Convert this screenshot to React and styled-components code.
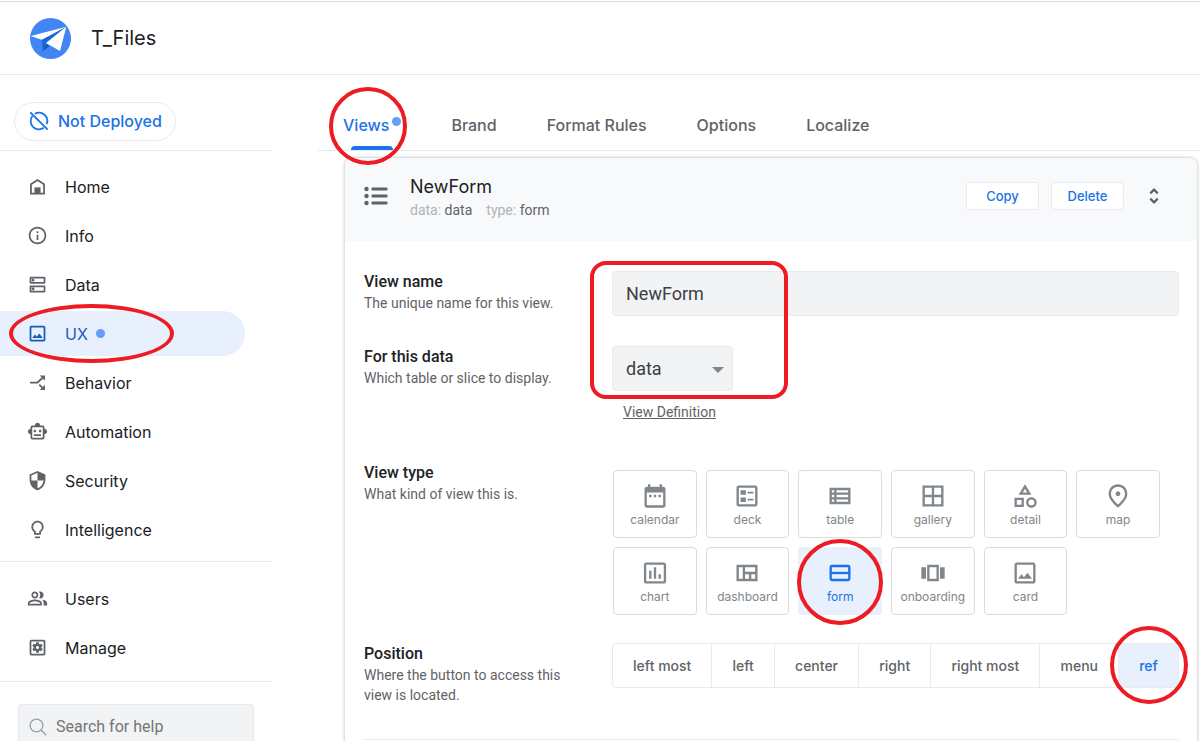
import React, { useState } from "react";
import styled, { createGlobalStyle, css } from "styled-components";
import {
  MdInfoOutline,
  MdOutlineDns,
  MdOutlineImage,
  MdOutlineSmartToy,
  MdSecurity,
  MdLightbulbOutline,
  MdOutlinePeopleAlt,
  MdOutlineSettingsApplications,
  MdDateRange,
  MdOutlineViewList,
  MdOutlineCategory,
  MdOutlinePlace,
  MdInsertChartOutlined,
  MdOutlineViewQuilt,
  MdOutlineViewCarousel,
} from "react-icons/md";

const colors = {
  blue: "#1a73e8",
  deepBlue: "#185abc",
  dot: "#669df6",
  selected: "#e8f0fe",
  text: "#202124",
  grey: "#5f6368",
  iconGrey: "#80868b",
  line: "#e8eaed",
  field: "#f1f3f4",
  marker: "#ed1c24",
};

const display = `Inter, "Open Sans", sans-serif`;
const body = `Roboto, "Liberation Sans", sans-serif`;

const GlobalStyle = createGlobalStyle`
  * { box-sizing: border-box; }
  body {
    margin: 0;
    background: white;
    color: ${colors.text};
    font-family: ${body};
    overflow: hidden;
  }
  button, input, select { font: inherit; color: inherit; margin: 0; }
  svg { display: block; flex: none; }
`;

const Page = styled.div`
  display: flex;
  flex-direction: column;
  height: 100vh;
  overflow: hidden;
`;

const TopBar = styled.header`
  display: flex;
  align-items: center;
  gap: 20px;
  flex: none;
  height: 74px;
  margin-top: 1px;
  padding: 0 30px;
  border-top: 1px solid #dadce0;
  border-bottom: 1px solid ${colors.line};
`;

const AppName = styled.h1`
  margin: 0;
  font: 400 20px/28px ${display};
`;

const Columns = styled.div`
  display: flex;
  flex: 1;
  min-height: 0;
`;

const Sidebar = styled.aside`
  flex: none;
  width: 272px;
`;

const DeployRow = styled.div`
  padding: 27px 14px 9px;
  border-bottom: 1px solid ${colors.line};
`;

const DeployButton = styled.button`
  display: inline-flex;
  align-items: center;
  vertical-align: top;
  gap: 8px;
  height: 39px;
  padding: 0 13px 2px;
  border: 1px solid ${colors.line};
  border-radius: 20px;
  background: white;
  color: ${colors.blue};
  font: 500 16px/24px ${display};
`;

const NavGroup = styled.nav`
  display: flex;
  flex-direction: column;
  gap: 4px;
  padding: ${props => props.$first ? "13px 27px 9px 0" : "14px 27px 11px 0"};
  border-bottom: 1px solid ${colors.line};
`;

const NavItem = styled.a`
  position: relative;
  display: flex;
  align-items: center;
  height: 45px;
  padding-left: 27px;
  border-radius: 0 23px 23px 0;
  color: ${props => props.$active ? colors.deepBlue : colors.text};
  background: ${props => props.$active ? colors.selected : "none"};
  font: 400 16px/24px ${display};
  text-decoration: none;

  svg {
    margin-right: 17px;
    color: ${props => props.$active ? colors.deepBlue : colors.grey};
  }
`;

const Dot = styled.span`
  width: 9px;
  height: 9px;
  border-radius: 50%;
  background: ${colors.dot};
`;

const NavDot = styled(Dot)`
  margin-left: 8px;
`;

const SearchBox = styled.label`
  display: flex;
  align-items: center;
  gap: 9px;
  height: 45px;
  margin: 22px 18px 0;
  padding: 0 10px;
  border: 1px solid ${colors.line};
  border-radius: 4px;
  background: ${colors.field};
  color: #9aa0a6;

  input {
    width: 100%;
    min-width: 0;
    padding: 0;
    border: none;
    outline: none;
    background: none;
    font: 400 16px/24px ${body};
  }
  input::placeholder { color: #757575; }
`;

const Main = styled.main`
  display: flex;
  flex-direction: column;
  flex: 1;
  min-width: 0;
  margin-left: 46px;
`;

const Tabs = styled.div`
  display: flex;
  gap: 50px;
  flex: none;
  height: 76px;
  padding-left: 25px;
  border-bottom: 1px solid ${colors.line};
`;

const Tab = styled.button`
  position: relative;
  display: flex;
  align-items: center;
  gap: 3px;
  padding: 25px 0 0;
  height: 75px;
  border: none;
  background: none;
  color: ${props => props.$active ? colors.blue : colors.grey};
  font: 500 16px/24px ${display};

  ${props => props.$active && css`
    &::after {
      content: "";
      position: absolute;
      bottom: 0;
      left: 8px;
      right: 8px;
      height: 4px;
      border-radius: 4px 4px 0 0;
      background: ${colors.blue};
    }
  `}
`;

const TabDot = styled(Dot)`
  align-self: flex-start;
  margin-top: 17px;
`;

const Card = styled.section`
  flex: none;
  margin: 7px 3px 0 27px;
  padding-bottom: 24px;
  border-radius: 8px;
  box-shadow: 0 0 3px 1px rgba(60, 64, 67, 0.24);
  background: white;
`;

const CardHeader = styled.div`
  display: flex;
  align-items: flex-start;
  height: 83px;
  padding: 17px 34px 0 16px;
  border-radius: 8px 8px 0 0;
  background: #f8f9fb;
`;

const CardIcon = styled.div`
  width: 49px;
  padding-top: 8px;
  color: ${colors.grey};
`;

const Heading = styled.div`
  flex: 1;
`;

const Title = styled.h2`
  margin: 0;
  font: 400 18px/24px ${display};
`;

const Meta = styled.p`
  display: flex;
  gap: 14px;
  margin: 0;
  color: ${colors.grey};
  font-size: 14px;
  line-height: 22px;

  em {
    color: #b0b3b7;
    font-style: normal;
  }
`;

const CardActions = styled.div`
  display: flex;
  align-items: center;
  gap: 12px;
  padding-top: 7px;
`;

const SmallButton = styled.button`
  width: 73px;
  height: 28px;
  padding: 0;
  border: 1px solid ${colors.line};
  border-radius: 4px;
  background: white;
  color: ${colors.blue};
  font: 500 13px/20px ${display};
`;

const IconButton = styled.button`
  display: flex;
  padding: 0;
  margin-left: 9px;
  border: none;
  background: none;
  color: ${colors.grey};
`;

const Fields = styled.div`
  margin: 30px 18px 0 19px;
  padding-bottom: 34px;
  border-bottom: 1px solid ${colors.line};
`;

const FieldGroup = styled.div`
  position: relative;
`;

const Field = styled.div`
  display: grid;
  grid-template-columns: 248px minmax(0, 1fr);
  align-items: start;
  margin-bottom: ${props => props.$gap || 0}px;
`;

const FieldLabel = styled.label`
  display: block;
  padding-right: 30px;
  color: ${colors.grey};
  font-size: 14px;
  line-height: 20px;

  strong {
    display: block;
    color: ${colors.text};
    font-size: 16px;
    font-weight: 500;
    line-height: 22px;
  }
`;

const fieldBox = css`
  height: 45px;
  border: 1px solid ${colors.line};
  border-radius: 4px;
  background: ${colors.field};
  font-size: 18px;
  color: #3c4043;
`;

const TextInput = styled.input`
  ${fieldBox}
  width: 100%;
  padding: 0 13px;
`;

const SelectWrap = styled.div`
  position: relative;
  width: 121px;

  select {
    ${fieldBox}
    display: block;
    width: 100%;
    padding: 0 13px;
    appearance: none;
  }

  &::after {
    content: "";
    position: absolute;
    top: 21px;
    right: 9px;
    border: 6px solid transparent;
    border-top-color: ${colors.iconGrey};
    border-bottom: none;
    pointer-events: none;
  }
`;

const DefinitionLink = styled.a`
  display: inline-block;
  margin: 10px 0 0 11px;
  color: ${colors.grey};
  font-size: 14px;
  line-height: 22px;
`;

const Tiles = styled.div`
  display: grid;
  grid-template-columns: repeat(6, 1fr);
  gap: 9px;
  padding: 8px 19px 0 1px;
`;

const Tile = styled.button`
  position: relative;
  display: flex;
  flex-direction: column;
  align-items: center;
  height: 68px;
  padding: 11px 0 0;
  border: 1px solid ${props => props.$active ? colors.selected : "#dadce0"};
  border-radius: 4px;
  background: ${props => props.$active ? colors.selected : "white"};
  color: ${props => props.$active ? colors.blue : colors.iconGrey};
  font: 400 12px/20px ${display};
`;

const Segments = styled.div`
  display: flex;
  height: 45px;
  border: 1px solid ${colors.line};
  border-radius: 4px;
`;

const Segment = styled.button`
  position: relative;
  flex: 1 1 auto;
  padding: 0;
  border: none;
  border-left: ${props => props.$first ? "none" : `1px solid ${colors.line}`};
  background: ${props => props.$active ? colors.selected : "none"};
  color: ${props => props.$active ? colors.blue : colors.grey};
  font: 500 14px/20px ${display};
  white-space: nowrap;
`;

// hand-drawn style marker laid over whatever it calls out
const Marker = styled.span`
  position: absolute;
  z-index: 1;
  left: ${props => props.$x}px;
  top: ${props => props.$y}px;
  width: ${props => props.$w}px;
  height: ${props => props.$h}px;
  border: 4px solid ${colors.marker};
  border-radius: ${props => props.$radius || "50%"};
  pointer-events: none;
`;

const Svg = ({size = 21, children, ...rest}) => (
  <svg width={size} height={size} viewBox="0 0 24 24" fill="none" stroke="currentColor" strokeWidth="2" aria-hidden="true" {...rest}>
    {children}
  </svg>
);

const Logo = () => (
  <svg width="41" height="41" viewBox="0 0 41 41" aria-hidden="true">
    <circle cx="20.500" cy="20.500" r="20.500" fill="#4285f4" />
    <path d="M11.700 21.500L36.300 8.700 16 25 12.700 33.500z" fill="#1967d2" />
    <path d="M12.700 33.500L16 25 19.500 28z" fill="#185abc" />
    <path d="M.7 18L36.300 8.700 11.700 21.800z" fill="white" />
    <path d="M36.300 8.700L30 33 16 25z" fill="white" />
  </svg>
);

const NotDeployedIcon = () => (
  <Svg size={22}>
    <path d="M2.500 2.500L21.500 21.500" />
    <path d="M7.500 4.200A9 9 0 0 1 20.300 15.500" />
    <path d="M4.800 6.600A9 9 0 0 0 17.200 19.400" />
  </Svg>
);

const HomeIcon = () => (
  <Svg>
    <path d="M4.500 9.500L12 4.500l7.500 5V20h-15z" />
    <path d="M8.500 13h7v7h-7z" fill="currentColor" stroke="none" />
  </Svg>
);

const BehaviorIcon = () => (
  <Svg>
    <path d="M3.500 12H12l6.500-6M14 14.500l4.500 4.500" />
    <path d="M14.500 4H20.500V10zM20.500 14.500V20.500H14.500z" fill="currentColor" stroke="none" />
  </Svg>
);

const SearchIcon = () => (
  <Svg size={18} strokeWidth="1.800">
    <circle cx="10" cy="10" r="8.500" />
    <path d="M16 16l7 7" />
  </Svg>
);

const UnfoldIcon = () => (
  <Svg size={18} strokeWidth="3">
    <path d="M7 8.500l5-5 5 5M7 15.500l5 5 5-5" />
  </Svg>
);

const ListIcon = () => (
  <svg width="30" height="26" viewBox="0 0 30 26" fill="currentColor" aria-hidden="true">
    {[6, 13, 20].map(y => (
      <g key={y}>
        <circle cx="5.500" cy={y} r="2.200" />
        <rect x="10.500" y={y - 1.5} width="16" height="3" rx="1" />
      </g>
    ))}
  </svg>
);

const DeckIcon = ({size}) => (
  <Svg size={size}>
    <rect x="4" y="4" width="16" height="16" rx="1" />
    <path d="M6.500 7H11v4H6.500zM6.500 13.200H11v4H6.500z" fill="currentColor" stroke="none" />
    <path d="M12.500 9h5M12.500 15.200h5" strokeWidth="1.500" />
  </Svg>
);

const GalleryIcon = ({size}) => (
  <Svg size={size}>
    <path d="M4 4h16v16H4zM12 4v16M4 12h16" />
  </Svg>
);

const FormIcon = ({size}) => (
  <Svg size={size}>
    <rect x="4" y="6" width="16" height="12" rx="1" />
    <path d="M4 12h16" />
  </Svg>
);

const mainNav = [
  {name: "Home", Icon: HomeIcon},
  {name: "Info", Icon: MdInfoOutline},
  {name: "Data", Icon: MdOutlineDns},
  {name: "UX", Icon: MdOutlineImage},
  {name: "Behavior", Icon: BehaviorIcon},
  {name: "Automation", Icon: MdOutlineSmartToy},
  {name: "Security", Icon: MdSecurity},
  {name: "Intelligence", Icon: MdLightbulbOutline},
];

const adminNav = [
  {name: "Users", Icon: MdOutlinePeopleAlt},
  {name: "Manage", Icon: MdOutlineSettingsApplications},
];

const tabs = ["Views", "Brand", "Format Rules", "Options", "Localize"];

const viewTypes = [
  {name: "calendar", Icon: MdDateRange},
  {name: "deck", Icon: DeckIcon},
  {name: "table", Icon: MdOutlineViewList},
  {name: "gallery", Icon: GalleryIcon},
  {name: "detail", Icon: MdOutlineCategory},
  {name: "map", Icon: MdOutlinePlace},
  {name: "chart", Icon: MdInsertChartOutlined},
  {name: "dashboard", Icon: MdOutlineViewQuilt},
  {name: "form", Icon: FormIcon},
  {name: "onboarding", Icon: MdOutlineViewCarousel},
  {name: "card", Icon: MdOutlineImage},
];

const positions = ["left most", "left", "center", "right", "right most", "menu", "ref"];

function Nav({items, first}) {
  return (
    <NavGroup $first={first}>
      {items.map(({name, Icon}) => (
        <NavItem key={name} href={`#${name.toLowerCase()}`} $active={name === "UX"}>
          <Icon size={21}/>
          {name}
          {name === "UX" && <NavDot/>}
          {name === "UX" && <Marker $x={9} $y={-7} $w={165} $h={59}/>}
        </NavItem>
      ))}
    </NavGroup>
  );
}

export default function App() {
  const [viewName, setViewName] = useState("NewForm");
  const [viewType, setViewType] = useState("form");
  const [position, setPosition] = useState("ref");

  return (
    <Page>
      <GlobalStyle/>
      <TopBar>
        <Logo/>
        <AppName>T_Files</AppName>
      </TopBar>
      <Columns>
        <Sidebar>
          <DeployRow>
            <DeployButton><NotDeployedIcon/>Not Deployed</DeployButton>
          </DeployRow>
          <Nav items={mainNav} first/>
          <Nav items={adminNav}/>
          <SearchBox>
            <SearchIcon/>
            <input type="search" placeholder="Search for help" aria-label="Search for help"/>
          </SearchBox>
        </Sidebar>
        <Main>
          <Tabs>
            {tabs.map(name => (
              <Tab key={name} $active={name === "Views"}>
                {name}
                {name === "Views" && <TabDot/>}
                {name === "Views" && <Marker $x={-14} $y={12} $w={78} $h={78}/>}
              </Tab>
            ))}
          </Tabs>
          <Card>
            <CardHeader>
              <CardIcon><ListIcon/></CardIcon>
              <Heading>
                <Title>NewForm</Title>
                <Meta>
                  <span><em>data:</em> data</span>
                  <span><em>type:</em> form</span>
                </Meta>
              </Heading>
              <CardActions>
                <SmallButton>Copy</SmallButton>
                <SmallButton>Delete</SmallButton>
                <IconButton aria-label="Expand"><UnfoldIcon/></IconButton>
              </CardActions>
            </CardHeader>
            <Fields>
              <FieldGroup>
                <Field $gap={30}>
                  <FieldLabel htmlFor="view-name">
                    <strong>View name</strong>
                    The unique name for this view.
                  </FieldLabel>
                  <TextInput id="view-name" value={viewName} onChange={e => setViewName(e.target.value)}/>
                </Field>
                <Field $gap={39}>
                  <FieldLabel htmlFor="view-data">
                    <strong>For this data</strong>
                    Which table or slice to display.
                  </FieldLabel>
                  <div>
                    <SelectWrap>
                      <select id="view-data" defaultValue="data">
                        <option>data</option>
                      </select>
                    </SelectWrap>
                    <DefinitionLink href="#definition">View Definition</DefinitionLink>
                  </div>
                </Field>
                <Marker $x={226} $y={-10} $w={198} $h={138} $radius="16px"/>
              </FieldGroup>
              <Field $gap={28}>
                <FieldLabel as="div">
                  <strong>View type</strong>
                  What kind of view this is.
                </FieldLabel>
                <Tiles>
                  {viewTypes.map(({name, Icon}) => (
                    <Tile key={name} $active={name === viewType} onClick={() => setViewType(name)}>
                      <Icon size={28}/>
                      {name}
                      {name === "form" && <Marker $x={-2} $y={-9} $w={86} $h={86}/>}
                    </Tile>
                  ))}
                </Tiles>
              </Field>
              <Field>
                <FieldLabel as="div">
                  <strong>Position</strong>
                  Where the button to access this view is located.
                </FieldLabel>
                <Segments>
                  {positions.map((name, i) => (
                    <Segment key={name} $first={i === 0} $active={name === position} onClick={() => setPosition(name)}>
                      {name}
                      {name === "ref" && <Marker $x={-9} $y={-18} $w={78} $h={78}/>}
                    </Segment>
                  ))}
                </Segments>
              </Field>
            </Fields>
          </Card>
        </Main>
      </Columns>
    </Page>
  );
}
